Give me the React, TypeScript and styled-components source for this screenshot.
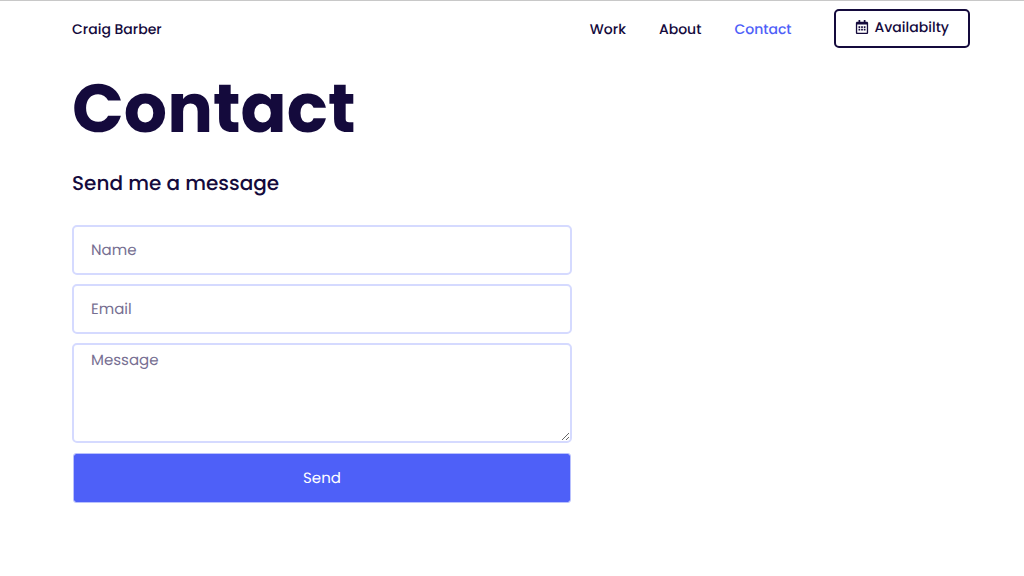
import React from "react";
import styled, { createGlobalStyle } from "styled-components";
import { FaRegCalendarAlt } from "react-icons/fa";

const ink = "#140a3c";
const accent = "#4e60f8";
const outline = "#d5daff";

const GlobalStyle = createGlobalStyle`
  *, *::before, *::after { box-sizing: border-box; }
  body {
    margin: 0;
    background: #fff;
    color: ${ink};
    font-family: Poppins, Inter, "Liberation Sans", sans-serif;
    text-rendering: geometricPrecision;
  }
  input, textarea, button { text-rendering: inherit; }
`;

const Page = styled.div`
  border-top: 1px solid #c8c8c8;
`;

const Header = styled.header`
  display: flex;
  align-items: center;
  justify-content: space-between;
  padding: 8px 54px 0 72px;
  font-size: 14px;
  font-weight: 500;
  line-height: 20px;
`;

const Brand = styled.a`
  color: ${ink};
  text-decoration: none;
`;

const Nav = styled.nav`
  display: flex;
  align-items: center;
  gap: 33px;
`;

const NavLink = styled.a<{ $active?: boolean }>`
  color: ${({ $active }) => ($active ? accent : ink)};
  text-decoration: none;
`;

const AvailabilityButton = styled.button`
  display: flex;
  align-items: center;
  gap: 6px;
  height: 39px;
  margin-left: 9px;
  padding: 0 19px 3px;
  border: 2px solid ${ink};
  border-radius: 5px;
  background: none;
  color: inherit;
  font: inherit;
  cursor: pointer;
`;

const Main = styled.main`
  padding: 21px 72px 0;
`;

const Title = styled.h1`
  margin: 0;
  font-size: 68px;
  font-weight: 700;
  line-height: 80px;
`;

const Subtitle = styled.h2`
  margin: 18px 0 26px;
  font-size: 20px;
  font-weight: 500;
  line-height: 32px;
`;

const Form = styled.form`
  display: flex;
  flex-direction: column;
  gap: 9px;
  max-width: 500px;
`;

const Input = styled.input`
  height: 50px;
  padding: 0 17px;
  border: 2px solid ${outline};
  border-radius: 5px;
  background: #fff;
  color: ${ink};
  font: inherit;
  font-size: 15px;

  &::placeholder {
    color: #776f92;
    opacity: 1;
  }
`;

const MessageBox = styled(Input).attrs({ as: "textarea" })`
  display: block;
  height: 100px;
  padding: 4px 17px;
  line-height: 24px;
  resize: vertical;
`;

const SendButton = styled.button`
  height: 50px;
  margin: 1px 1px 0;
  border: 1px solid #b9c1fd;
  border-radius: 3px;
  background: ${accent};
  background-clip: padding-box;
  color: #fff;
  font: inherit;
  font-size: 15px;
  cursor: pointer;
`;

export default function App() {
  return (
    <Page>
      <GlobalStyle />
      <Header>
        <Brand href="#home">Craig Barber</Brand>
        <Nav>
          <NavLink href="#work">Work</NavLink>
          <NavLink href="#about">About</NavLink>
          <NavLink href="#contact" $active aria-current="page">Contact</NavLink>
          <AvailabilityButton type="button">
            <FaRegCalendarAlt aria-hidden="true" />
            Availabilty
          </AvailabilityButton>
        </Nav>
      </Header>
      <Main>
        <Title>Contact</Title>
        <Subtitle>Send me a message</Subtitle>
        <Form onSubmit={(event) => event.preventDefault()}>
          <Input type="text" name="name" placeholder="Name" aria-label="Name" />
          <Input type="email" name="email" placeholder="Email" aria-label="Email" />
          <MessageBox name="message" placeholder="Message" aria-label="Message" />
          <SendButton type="submit">Send</SendButton>
        </Form>
      </Main>
    </Page>
  );
}
